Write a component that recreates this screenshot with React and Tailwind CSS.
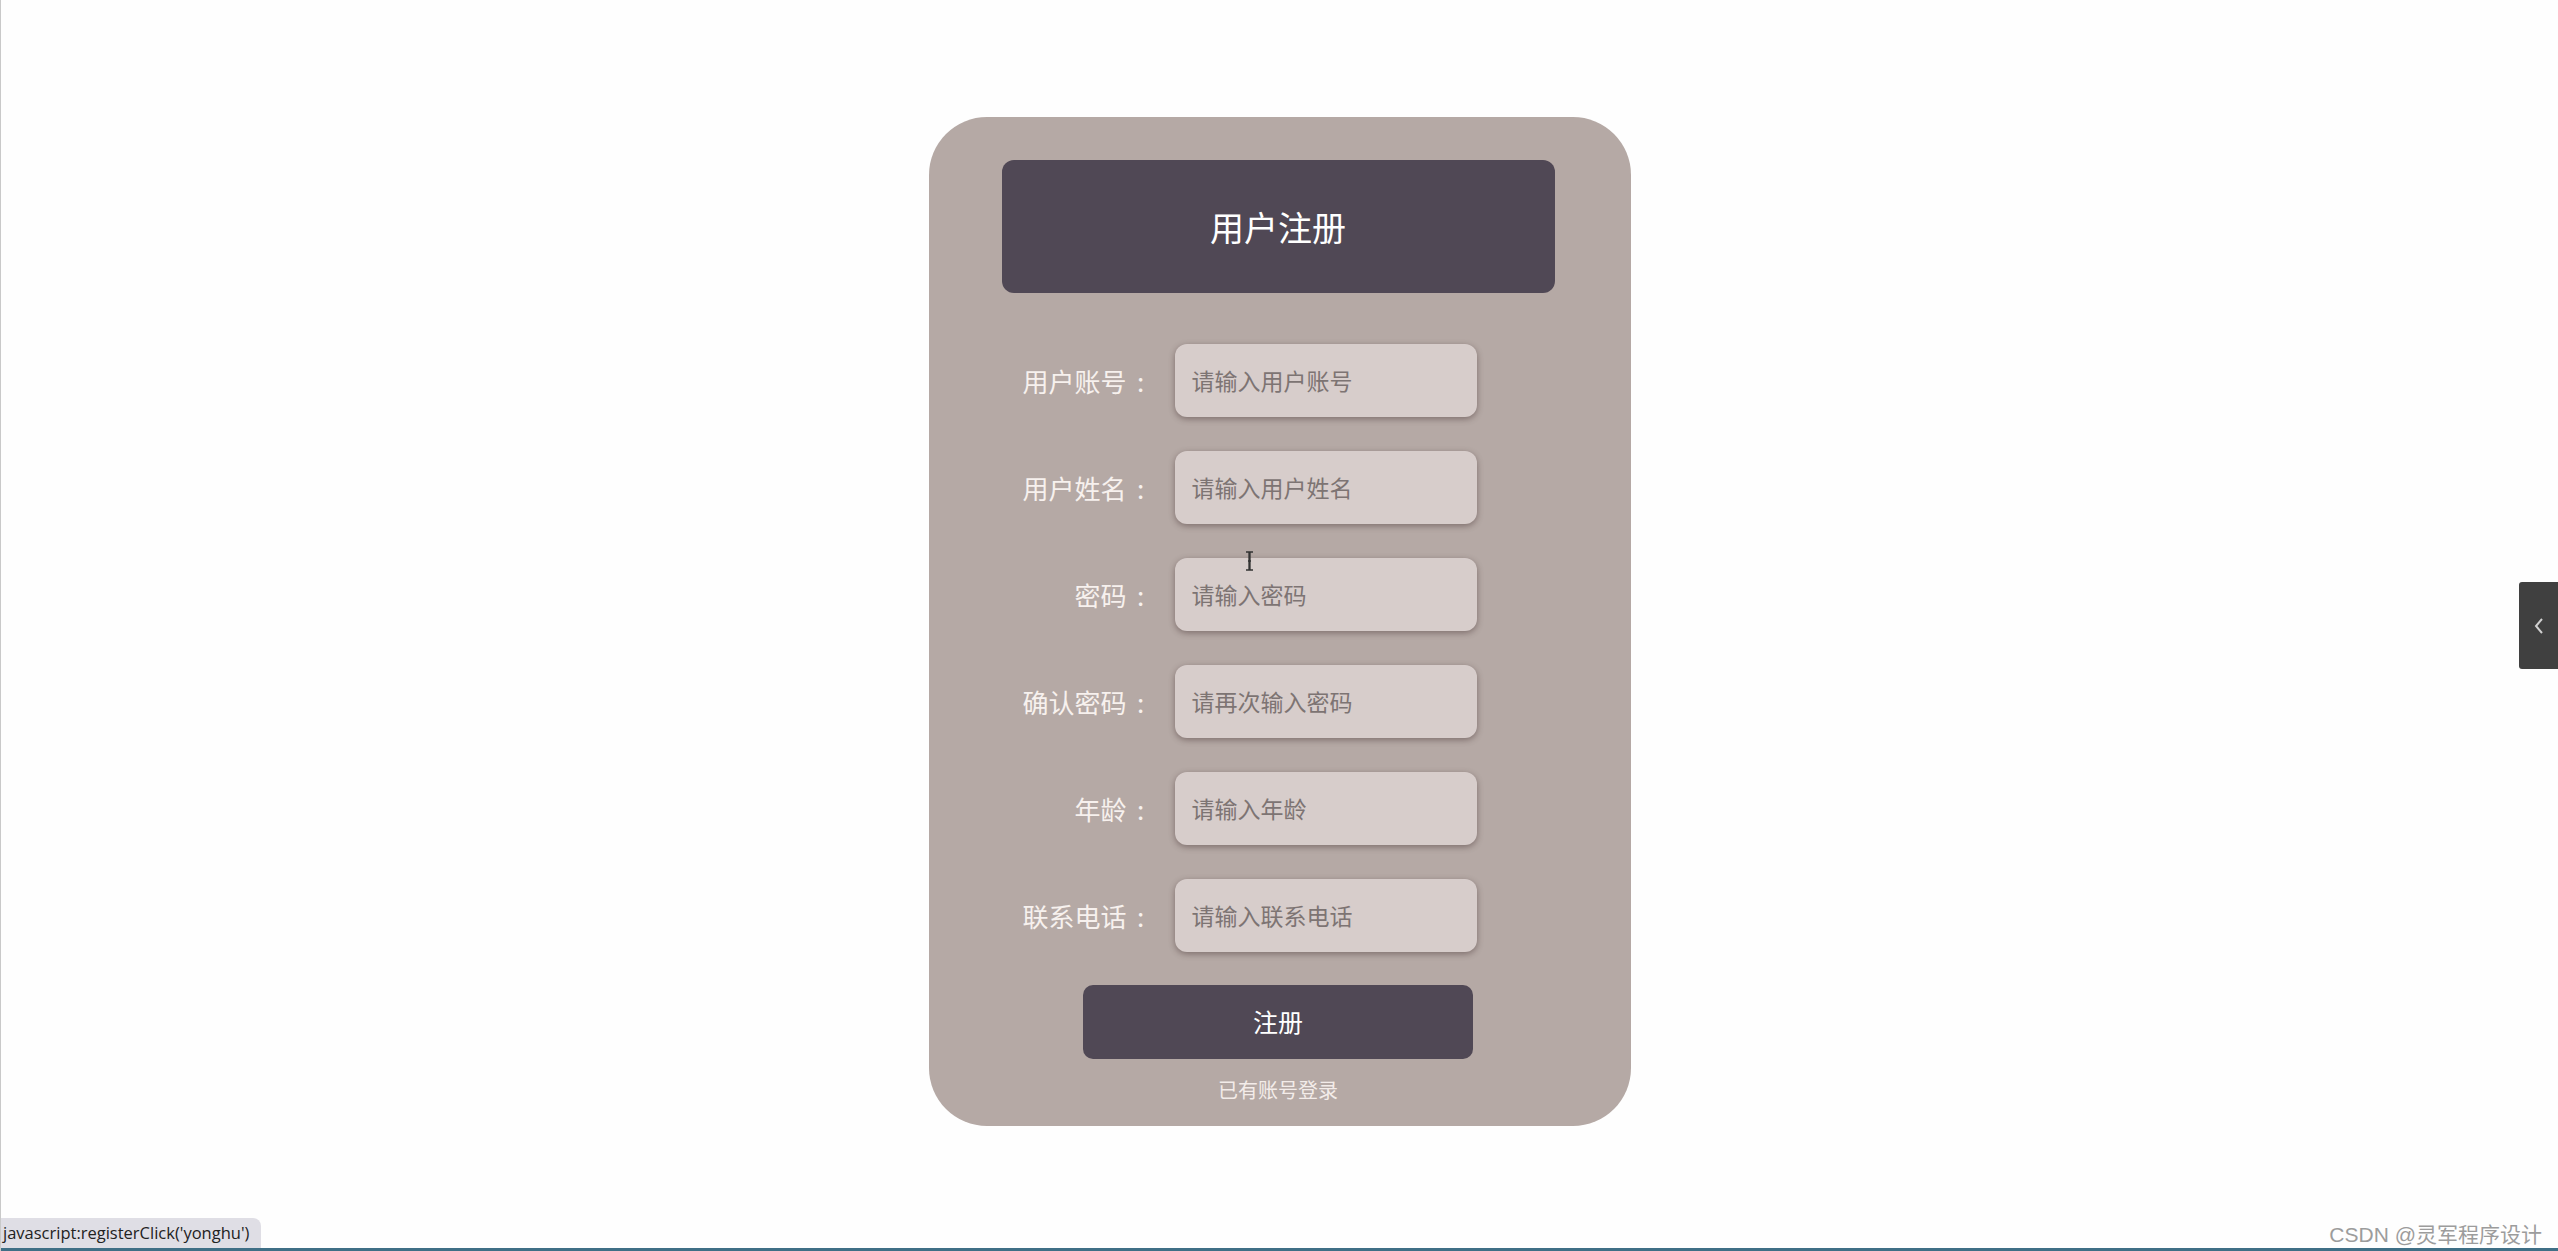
import React from "react";

const rows = [
  ["用户账号", "请输入用户账号"],
  ["用户姓名", "请输入用户姓名"],
  ["密码", "请输入密码"],
  ["确认密码", "请再次输入密码"],
  ["年龄", "请输入年龄"],
  ["联系电话", "请输入联系电话"],
];

const cjk = { fontFamily: '"Noto Sans CJK SC", "Noto Sans", sans-serif' };

export default function App() {
  return (
    <div
      className="relative w-[2558px] h-[1251px] overflow-hidden bg-[#fefefe] border-l border-[#c9c9c9]"
      style={cjk}
    >
      <div className="pt-[117px]">
        <div className="mx-auto w-[702px] h-[1009px] rounded-[58px] bg-[#b5a9a5] pt-[43px] pl-[73px] pr-[76px] flex flex-col">
          <div className="h-[133px] rounded-[12px] bg-[#504855] flex items-center justify-center text-[34px] text-white">
            用户注册
          </div>
          <div className="mt-[51px] flex flex-col gap-[34px]">
            {rows.map(([label, ph]) => (
              <div key={label} className="flex items-center h-[73px]">
                <div className="w-[153px] flex justify-end text-[26px] text-[#f7f1ee]">
                  <span>{label}</span>
                  <span className="inline-block w-[28px] text-center">:</span>
                </div>
                <div className="ml-[20px] w-[302px] h-[73px] rounded-[12px] bg-[#d7cdcb] shadow-[0_2px_6px_rgba(60,40,40,0.45)] flex items-center pl-[17px] text-[23px] text-[#7d7473]">
                  {ph}
                </div>
              </div>
            ))}
          </div>
          <div className="mt-[33px] mx-auto w-[390px] h-[74px] rounded-[10px] bg-[#504855] flex items-center justify-center text-[25px] text-white">
            注册
          </div>
          <div className="mt-[16px] text-center text-[20px] text-[#f3ece9]">已有账号登录</div>
        </div>
      </div>

      {/* text cursor */}
      <svg className="absolute left-[1243px] top-[551px]" width="11" height="20" viewBox="0 0 11 20">
        <path d="M2 1h3v18H2M9 1H6v18h3M4 10h3" fill="none" stroke="#333" strokeWidth="1.3" />
      </svg>

      {/* right side tab */}
      <div className="absolute left-[2518px] top-[582px] w-[40px] h-[87px] rounded-l-[3px] bg-[#404040] flex items-center justify-center">
        <svg width="12" height="22" viewBox="0 0 12 22">
          <path d="M9 4L3 11l6 7" fill="none" stroke="#d0d0d0" strokeWidth="2" />
        </svg>
      </div>

      {/* status bar */}
      <div
        className="absolute left-0 top-[1218px] h-[30px] w-[260px] rounded-tr-[8px] bg-[#dfdee5] flex items-center pl-[2px] text-[16.5px] text-[#222]"
        style={{ fontFamily: '"Open Sans", "Liberation Sans", sans-serif' }}
      >
        javascript:registerClick('yonghu')
      </div>

      {/* watermark */}
      <div className="absolute right-[16px] top-[1218px] text-[21px] text-[#9c9c9c]">
        <span style={{ fontFamily: '"Liberation Sans", sans-serif' }}>CSDN @</span>灵军程序设计
      </div>

      {/* bottom strip */}
      <div className="absolute left-0 bottom-0 w-full h-[3px] bg-[#3f6f86]"></div>
    </div>
  );
}
